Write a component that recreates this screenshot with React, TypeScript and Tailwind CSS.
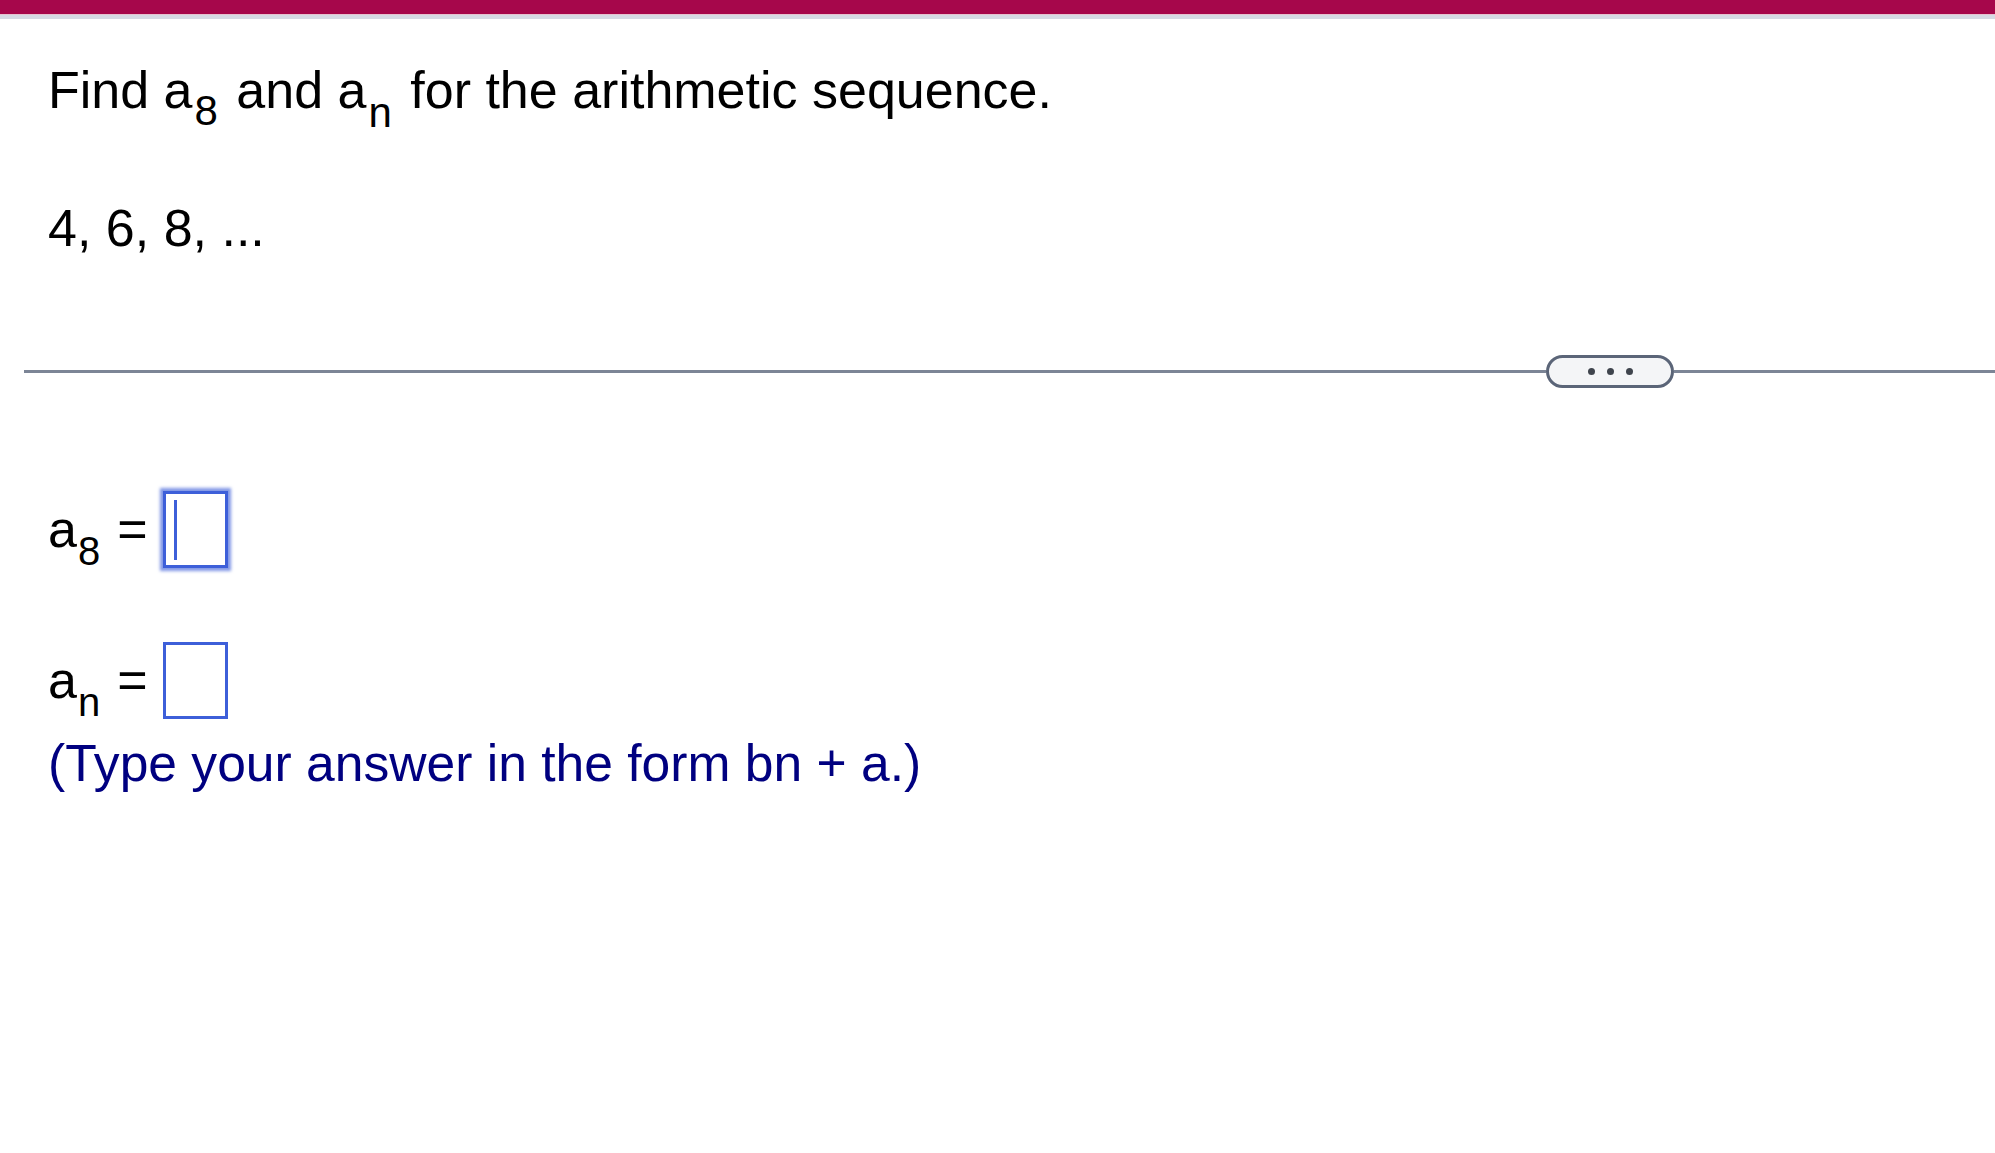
import React from "react";

const Sub = ({ children, down = 17 }: { children: React.ReactNode; down?: number }) => (
  <span
    className={`ml-[2px] mr-[4px] text-[42px] leading-[0] ${
      down === 17 ? "align-[-17px]" : down === 18 ? "align-[-18px]" : "align-[-19px]"
    }`}
  >
    {children}
  </span>
);

const AnswerBox = ({ focused }: { focused?: boolean }) => (
  <div
    className={`ml-[15px] flex h-[77px] w-[65px] items-start border-[3px] border-[#3d5fd9] bg-white pl-[8px] pt-[6px] ${
      focused ? "shadow-[0_0_3px_3px_rgba(61,95,217,0.65)]" : ""
    }`}
  >
    {focused && <div className="h-[60px] w-[3px] bg-[#3d5fd9]" />}
  </div>
);

export default function App() {
  return (
    <div className="min-h-screen bg-white font-['Liberation_Sans',Arial,sans-serif] text-black">
      <div className="h-[14px] bg-[#a6074b]" />
      <div className="h-[1px] bg-[#e6c2d0]" />
      <div className="h-[4px] bg-[#d6dae4]" />

      <div className="pl-[48px] pt-[41px]">
        <p className="text-[52px] leading-[60px]">
          Find a<Sub>8</Sub> and a<Sub down={19}>n</Sub> for the arithmetic sequence.
        </p>
        <p className="mt-[78px] text-[52px] leading-[60px]">4, 6, 8, ...</p>
      </div>

      {/* divider with expand button */}
      <div className="ml-[24px] mt-[97px] flex items-center">
        <div className="h-[3px] flex-1 bg-[#7c8596]" />
        <button className="flex h-[33px] w-[128px] items-center justify-center gap-[12px] rounded-full border-[3px] border-[#5b6578] bg-[#f4f5f7]">
          <span className="h-[7px] w-[7px] rounded-full bg-[#3f444d]" />
          <span className="h-[7px] w-[7px] rounded-full bg-[#3f444d]" />
          <span className="h-[7px] w-[7px] rounded-full bg-[#3f444d]" />
        </button>
        <div className="h-[3px] w-[321px] bg-[#7c8596]" />
      </div>

      <div className="pl-[48px]">
        <div className="mt-[103px] flex items-center">
          <span className="text-[52px] leading-[77px]">
            a<span className="ml-[1px] text-[40px] leading-[0] align-[-18px]">8</span>
          </span>
          <span className="ml-[17px] text-[52px] leading-[77px]">=</span>
          <AnswerBox focused />
        </div>

        <div className="mt-[74px] flex items-center">
          <span className="text-[52px] leading-[77px]">
            a<span className="ml-[1px] text-[40px] leading-[0] align-[-18px]">n</span>
          </span>
          <span className="ml-[17px] text-[52px] leading-[77px]">=</span>
          <AnswerBox />
        </div>

        <p className="mt-[14px] text-[51.6px] leading-[60px] text-[#000080]">
          (Type your answer in the form bn + a.)
        </p>
      </div>
    </div>
  );
}
